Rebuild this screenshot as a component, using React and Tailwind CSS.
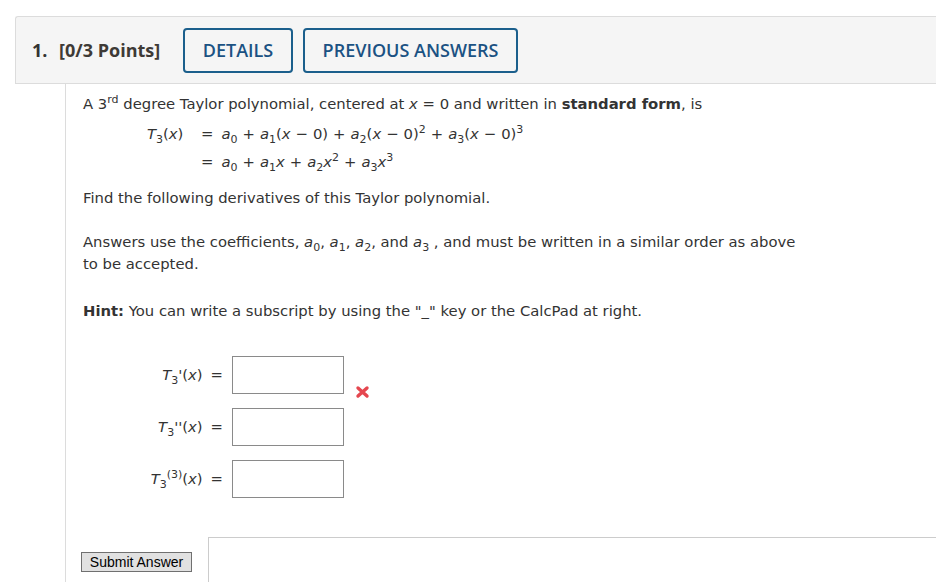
const body = { fontFamily: '"DejaVu Sans", Verdana, sans-serif' };
const head = { fontFamily: '"Open Sans", "Noto Sans", sans-serif' };

function V({ children }) {
    return <span className="italic">{children}</span>;
}

function Sub({ children }) {
    return <span className="text-[11px] not-italic align-[-4px] leading-none">{children}</span>;
}

function Sup({ children }) {
    return <span className="text-[11px] not-italic align-[6px] leading-none">{children}</span>;
}

function A({ n }) {
    return (
        <span>
            <V>a</V>
            <Sub>{n}</Sub>
        </span>
    );
}

function Op({ children }) {
    return <span className="px-[5px]">{children}</span>;
}

function AnswerRow({ label, showX }) {
    return (
        <div className="flex items-center h-[38px]">
            <div className="w-[150px] flex justify-end items-center pr-[9px] text-[14.8px] text-[#333]">
                {label}
                <span className="ml-[8px]">=</span>
            </div>
            <div className="w-[112px] h-[38px] border border-[#8a8a8a] bg-white" />
            {showX && (
                <svg className="ml-[11px] mt-[34px]" width="15" height="14" viewBox="0 0 15 14">
                    <path d="M3 3 L12 11 M12 3 L3 11" stroke="#e5474f" strokeWidth="3.4" strokeLinecap="round" />
                </svg>
            )}
        </div>
    );
}

export default function App() {
    return (
        <div className="w-[936px] h-[582px] bg-white overflow-hidden pt-[16px] pl-[15px]">
            <div
                className="h-[68px] bg-[#f5f5f5] border border-r-0 border-[#dcdcdc] rounded-tl-[3px] flex items-center pl-[16px]"
                style={head}
            >
                <div className="text-[18px] font-bold text-[#333] w-[151px]">
                    1. <span className="ml-[7px] text-[#3e3a36]">[0/3 Points]</span>
                </div>
                <button className="h-[45px] w-[110px] border-2 border-[#1b5f8c] rounded-[4px] text-[18px] font-semibold text-[#1b5283]">
                    DETAILS
                </button>
                <button className="ml-[10px] h-[45px] w-[215px] border-2 border-[#1b5f8c] rounded-[4px] text-[18px] font-semibold text-[#1b5283]">
                    PREVIOUS ANSWERS
                </button>
            </div>

            <div className="ml-[50px] border-l border-[#dcdcdc] pl-[17px] pt-[9px] h-[520px] text-[#333]" style={body}>
                <div className="text-[14.8px] leading-[22px]">
                    A 3<Sup>rd</Sup> degree Taylor polynomial, centered at <V>x</V> = 0 and written in{' '}
                    <b>standard form</b>, is
                </div>

                <div className="text-[14.8px] leading-[28px] mt-[5px]">
                    <div className="flex">
                        <div className="w-[118px] pl-[64px]">
                            <V>T</V>
                            <Sub>3</Sub>(<V>x</V>)
                        </div>
                        <div>
                            =<span className="ml-[8px]" />
                            <A n="0" />
                            <Op>+</Op>
                            <A n="1" />(<V>x</V>
                            <Op>−</Op>0)
                            <Op>+</Op>
                            <A n="2" />(<V>x</V>
                            <Op>−</Op>0)<Sup>2</Sup>
                            <Op>+</Op>
                            <A n="3" />(<V>x</V>
                            <Op>−</Op>0)<Sup>3</Sup>
                        </div>
                    </div>
                    <div className="flex">
                        <div className="w-[118px]" />
                        <div>
                            =<span className="ml-[8px]" />
                            <A n="0" />
                            <Op>+</Op>
                            <A n="1" />
                            <V>x</V>
                            <Op>+</Op>
                            <A n="2" />
                            <V>x</V>
                            <Sup>2</Sup>
                            <Op>+</Op>
                            <A n="3" />
                            <V>x</V>
                            <Sup>3</Sup>
                        </div>
                    </div>
                </div>

                <div className="text-[14.8px] leading-[22px] mt-[11px]">
                    Find the following derivatives of this Taylor polynomial.
                </div>

                <div className="text-[14.8px] leading-[22px] mt-[22px] w-[725px]">
                    Answers use the coefficients, <A n="0" />, <A n="1" />, <A n="2" />, and <A n="3" /> , and
                    must be written in a similar order as above to be accepted.
                </div>

                <div className="text-[14.8px] leading-[22px] mt-[25px]">
                    <b>Hint:</b> You can write a subscript by using the "_" key or the CalcPad at right.
                </div>

                <div className="mt-[34px] -ml-[1px] flex flex-col gap-[14px]">
                    <AnswerRow
                        showX
                        label={
                            <span>
                                <V>T</V>
                                <Sub>3</Sub>
                                <V>'</V>(<V>x</V>)
                            </span>
                        }
                    />
                    <AnswerRow
                        label={
                            <span>
                                <V>T</V>
                                <Sub>3</Sub>
                                <V>''</V>(<V>x</V>)
                            </span>
                        }
                    />
                    <AnswerRow
                        label={
                            <span>
                                <V>T</V>
                                <Sub>3</Sub>
                                <Sup>(3)</Sup>(<V>x</V>)
                            </span>
                        }
                    />
                </div>

                <div className="flex mt-[39px]">
                    <div className="pt-[13px]">
                        <button
                            className="-ml-[2px] w-[111px] h-[20px] bg-[#e1e1e1] border border-[#707070] text-[14px] leading-none text-black"
                            style={{ fontFamily: '"Liberation Sans", Arial, sans-serif' }}
                        >
                            Submit Answer
                        </button>
                    </div>
                    <div className="ml-[16px] flex-1 h-[60px] border-l border-t border-[#cccccc]" />
                </div>
            </div>
        </div>
    );
}
